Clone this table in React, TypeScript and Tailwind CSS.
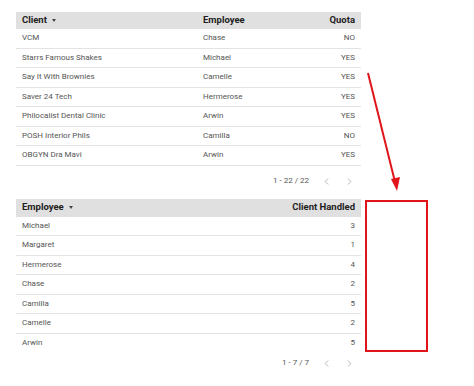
import { ChevronLeft, ChevronRight } from 'lucide-react';

const clients = [
  { client: 'VCM', employee: 'Chase', quota: 'NO' },
  { client: 'Starrs Famous Shakes', employee: 'Michael', quota: 'YES' },
  { client: 'Say It With Brownies', employee: 'Camelle', quota: 'YES' },
  { client: 'Saver 24 Tech', employee: 'Hermerose', quota: 'YES' },
  { client: 'Philocalist Dental Clinic', employee: 'Arwin', quota: 'YES' },
  { client: 'POSH Interior Phils', employee: 'Camilla', quota: 'NO' },
  { client: 'OBGYN Dra Mavi', employee: 'Arwin', quota: 'YES' },
];

const handled = [
  { name: 'Michael', count: 3 },
  { name: 'Margaret', count: 1 },
  { name: 'Hermerose', count: 4 },
  { name: 'Chase', count: 2 },
  { name: 'Camilla', count: 5 },
  { name: 'Camelle', count: 2 },
  { name: 'Arwin', count: 5 },
];

function SortCaret() {
  return <span className="ml-[5px] inline-block border-x-[2.5px] border-t-[3px] border-x-transparent border-t-[#444] align-middle" />;
}

function Pager({ label }: { label: string }) {
  return (
    <div className="flex items-center justify-end pr-[6px] text-[8px] text-[#555]">
      <span>{label}</span>
      <ChevronLeft className="ml-[12px] h-[11px] w-[11px] text-[#999]" strokeWidth={1.5} />
      <ChevronRight className="ml-[12px] h-[11px] w-[11px] text-[#999]" strokeWidth={1.5} />
    </div>
  );
}

export default function App() {
  return (
    <div className="relative h-[386px] w-[474px] bg-white pl-[16px] pt-[12px] font-['Roboto',sans-serif]">
      <div className="w-[345px]">
        <div className="flex h-[17px] items-center bg-[#e0e0e0] px-[6px] text-[9.5px] font-bold text-[#222]">
          <div className="flex w-[181px] items-center">Client<SortCaret /></div>
          <div className="flex-1">Employee</div>
          <div className="text-right">Quota</div>
        </div>
        {clients.map((r) => (
          <div key={r.client} className="flex h-[19.5px] items-center border-b border-[#e3e3e3] px-[6px] text-[8px] text-[#555]">
            <div className="w-[181px]">{r.client}</div>
            <div className="flex-1">{r.employee}</div>
            <div className="text-right">{r.quota}</div>
          </div>
        ))}
        <div className="flex h-[33px] items-center justify-end pb-[2px]">
          <Pager label="1 - 22 / 22" />
        </div>
      </div>

      <div className="flex items-start">
        <div className="w-[345px]">
          <div className="flex h-[18px] items-center bg-[#e0e0e0] px-[6px] text-[9.5px] font-bold text-[#222]">
            <div className="flex flex-1 items-center">Employee<SortCaret /></div>
            <div className="text-right">Client Handled</div>
          </div>
          {handled.map((r, i) => (
            <div
              key={r.name}
              className={`flex h-[19.5px] items-center px-[6px] text-[8px] text-[#555] ${i < handled.length - 1 ? 'border-b border-[#e3e3e3]' : ''}`}
            >
              <div className="flex-1">{r.name}</div>
              <div className="text-right">{r.count}</div>
            </div>
          ))}
          <div className="flex h-[20px] items-center justify-end">
            <Pager label="1 - 7 / 7" />
          </div>
        </div>
        <div className="ml-[4px] mt-[1px] h-[152px] w-[63px] border-2 border-[#e0141b]" />
      </div>

      {/* annotation arrow */}
      <svg className="absolute left-0 top-0" width="474" height="386" viewBox="0 0 474 386">
        <line x1="368" y1="73" x2="395" y2="182" stroke="#e0141b" strokeWidth="2" />
        <polygon points="397,191 391,179 400,177" fill="#e0141b" />
      </svg>
    </div>
  );
}
